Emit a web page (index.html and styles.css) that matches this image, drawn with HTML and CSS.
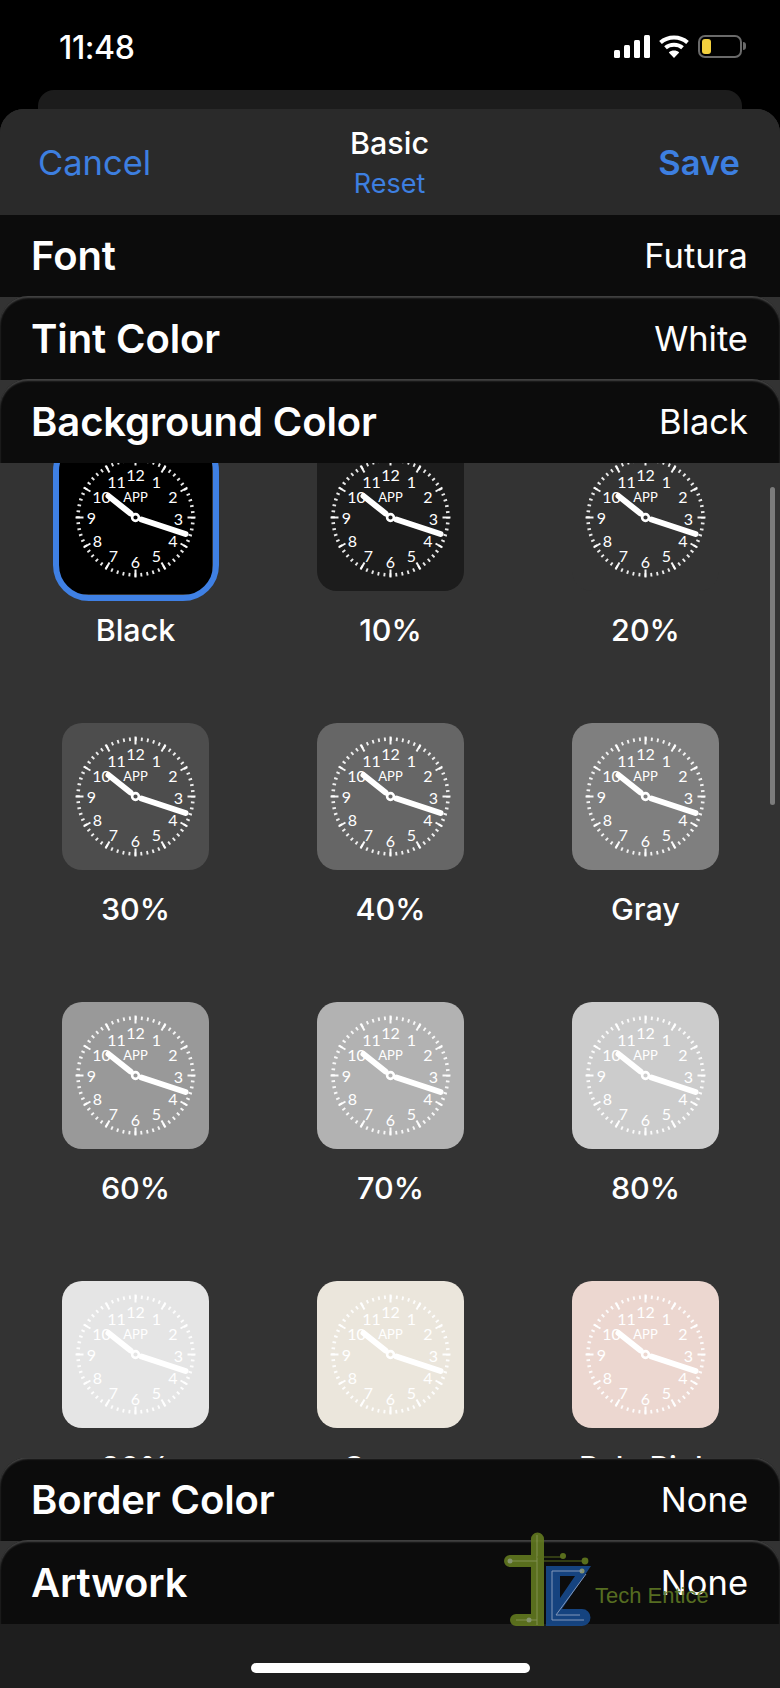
FILE: index.html
```html
<!DOCTYPE html>
<html lang="en">
<head>
<meta charset="utf-8">
<title>Basic</title>
<link rel="stylesheet" href="styles.css">
</head>
<body>
<main class="phone">
  <header class="status">
    <span class="time">11:48</span>
    <div class="status-icons">
      <svg class="signal" width="36" height="23" viewBox="0 0 36 23"><rect y="15" width="6" height="8" rx="1.5"/><rect x="10" y="10" width="6" height="13" rx="1.5"/><rect x="20" y="5" width="6" height="18" rx="1.5"/><rect x="30" y="0" width="6" height="23" rx="1.5"/></svg>
      <svg class="wifi" width="30" height="23" viewBox="0 0 30 23"><path d="M1.5 7.5 C9 0.8 21 0.8 28.5 7.5" /><path d="M6.5 12.8 C11 8.8 19 8.8 23.5 12.8"/><path class="wifi-dot" d="M15 23 L9.8 17.4 C12.6 15 17.4 15 20.2 17.4 Z"/></svg>
      <div class="battery"><span class="battery-fill"></span></div>
      <span class="battery-cap"></span>
    </div>
  </header>

  <div class="back-sheet"></div>

  <section class="sheet">
    <div class="nav">
      <button class="nav-btn">Cancel</button>
      <div class="nav-title"><strong>Basic</strong><a>Reset</a></div>
      <button class="nav-btn save">Save</button>
    </div>

    <div class="row flat"><span>Font</span><em>Futura</em></div>
    <div class="row"><span>Tint Color</span><em>White</em></div>
    <div class="row"><span>Background Color</span><em>Black</em></div>

    <div class="view">
      <div class="grid">
        <figure class="cell"><div class="tile selected t-black">
          <svg class="clock" viewBox="-73.5 -73.5 147 147">
            <g id="clock">
              <circle class="minor" r="57.5"/>
              <g class="major">
                <line y1="-60" y2="60"/>
                <line y1="-60" y2="60" transform="rotate(30)"/>
                <line y1="-60" y2="60" transform="rotate(60)"/>
                <line y1="-60" y2="60" transform="rotate(90)"/>
                <line y1="-60" y2="60" transform="rotate(120)"/>
                <line y1="-60" y2="60" transform="rotate(150)"/>
              </g>
              <g class="digits">
                <text x="0" y="-43">12</text>
                <text x="21" y="-36">1</text>
                <text x="37.5" y="-21.5">2</text>
                <text x="43" y="1">3</text>
                <text x="37.5" y="23">4</text>
                <text x="21" y="38">5</text>
                <text x="0" y="44">6</text>
                <text x="-22" y="38">7</text>
                <text x="-38" y="23">8</text>
                <text x="-44" y="0">9</text>
                <text x="-34" y="-21.5">10</text>
                <text x="-19" y="-36">11</text>
                <text class="app" x="0" y="-20.5">APP</text>
              </g>
              <path class="hand" d="M-5 -4 L-27 -21.5"/>
              <path class="hand" d="M6 2 L50 16.5"/>
              <circle class="hub" r="3.4"/>
            </g>
          </svg></div><figcaption>Black</figcaption></figure>
        <figure class="cell"><div class="tile t-10"><svg class="clock" viewBox="-73.5 -73.5 147 147"><use href="#clock"/></svg></div><figcaption>10%</figcaption></figure>
        <figure class="cell"><div class="tile t-20"><svg class="clock" viewBox="-73.5 -73.5 147 147"><use href="#clock"/></svg></div><figcaption>20%</figcaption></figure>
        <figure class="cell"><div class="tile t-30"><svg class="clock" viewBox="-73.5 -73.5 147 147"><use href="#clock"/></svg></div><figcaption>30%</figcaption></figure>
        <figure class="cell"><div class="tile t-40"><svg class="clock" viewBox="-73.5 -73.5 147 147"><use href="#clock"/></svg></div><figcaption>40%</figcaption></figure>
        <figure class="cell"><div class="tile t-gray"><svg class="clock" viewBox="-73.5 -73.5 147 147"><use href="#clock"/></svg></div><figcaption>Gray</figcaption></figure>
        <figure class="cell"><div class="tile t-60"><svg class="clock" viewBox="-73.5 -73.5 147 147"><use href="#clock"/></svg></div><figcaption>60%</figcaption></figure>
        <figure class="cell"><div class="tile t-70"><svg class="clock" viewBox="-73.5 -73.5 147 147"><use href="#clock"/></svg></div><figcaption>70%</figcaption></figure>
        <figure class="cell"><div class="tile t-80"><svg class="clock" viewBox="-73.5 -73.5 147 147"><use href="#clock"/></svg></div><figcaption>80%</figcaption></figure>
        <figure class="cell"><div class="tile t-90"><svg class="clock" viewBox="-73.5 -73.5 147 147"><use href="#clock"/></svg></div><figcaption>90%</figcaption></figure>
        <figure class="cell"><div class="tile t-cream"><svg class="clock" viewBox="-73.5 -73.5 147 147"><use href="#clock"/></svg></div><figcaption>Cream</figcaption></figure>
        <figure class="cell"><div class="tile t-pink"><svg class="clock" viewBox="-73.5 -73.5 147 147"><use href="#clock"/></svg></div><figcaption>Pale Pink</figcaption></figure>
      </div>
      <div class="scrollbar"></div>
    </div>

    <div class="row"><span>Border Color</span><em>None</em></div>
    <div class="row"><span>Artwork</span><em>None</em></div>
    <footer class="foot"><span class="home"></span></footer>
  </section>

  <div class="watermark">
    <svg class="logo" width="100" height="100" viewBox="0 0 100 100">
      <path class="lg-green" d="M31 9 a6.5 6.5 0 0 1 13 0 V96 H16 a6 6 0 0 1 0 -12 H31 V37 H10 a6 6 0 0 1 0 -12 H31 Z"/>
      <path class="lg-blue" d="M46 36 H91 L62 79 H82 a8.500 8.500 0 0 1 0 17 H46 Z M60 46 V68 L75 46 Z"/>
      <path class="lg-thin" d="M37 5 V95 M10 31 H37 M16 90 H37"/>
      <path class="lg-wire" d="M37 27 H63 M44 31 H85"/>
      <circle class="lg-node" cx="63" cy="26" r="3"/>
      <circle class="lg-node" cx="85" cy="31" r="3.400"/>
      <circle class="lg-dot" cx="10" cy="31" r="2.500"/>
      <circle class="lg-dot" cx="29" cy="90" r="2.500"/>
      <circle class="lg-dot" cx="82" cy="41" r="2.500"/>
      <path class="lg-line" d="M86 44 L56 85 H80 M82 41 H52 V90 H84"/>
    </svg>
    <span class="wm-text">Tech Entice</span>
  </div>
</main>
</body>
</html>
```
FILE: styles.css
```css
* { box-sizing: border-box; }
html, body { margin: 0; padding: 0; background: #000; }
body { font-family: Inter, "Liberation Sans", sans-serif; color: #fff; }

.phone { position: relative; width: 780px; height: 1688px; display: flex; flex-direction: column; overflow: hidden; background: #000; }

.status { height: 90px; flex: none; display: flex; justify-content: space-between; padding: 33px 34px 0 59px; }
.time { font-size: 32px; line-height: 30px; font-weight: 500; letter-spacing: -0.4px; }
.status-icons { display: flex; height: 23px; margin-top: 2px; align-items: flex-start; }
.signal { fill: #fff; margin-right: 9px; }
.wifi { margin-right: 9px; }
.wifi path { fill: none; stroke: #fff; stroke-width: 4px; }
.wifi .wifi-dot { fill: #fff; stroke: none; }
.battery { width: 44px; height: 23px; border: 2px solid #6a6a6a; border-radius: 7px; padding: 2px; }
.battery-fill { display: block; width: 9px; height: 15px; background: #f3d03e; border-radius: 3px; }
.battery-cap { width: 3px; height: 8px; margin: 7px 0 0 1px; background: #6a6a6a; border-radius: 0 3px 3px 0; }

.back-sheet { flex: none; height: 19px; margin: 0 38px; background: #1c1c1c; border-radius: 16px 16px 0 0; }

.sheet { flex: 1; min-height: 0; display: flex; flex-direction: column; background: #333; border-radius: 24px 24px 0 0; overflow: hidden; }

.nav { flex: none; height: 106px; background: #2a2a2a; display: grid; grid-template-columns: 1fr auto 1fr; align-items: center; padding: 0 40px 0 38px; }
.nav-btn { border: 0; padding: 2px 0 0; background: none; color: #3d7fe0; font: 400 34.5px/40px Inter, "Liberation Sans", sans-serif; justify-self: start; }
.nav-btn.save { font-weight: 600; justify-self: end; }
.nav-title { display: flex; flex-direction: column; align-items: center; padding-left: 1px; }
.nav-title strong { font-size: 30.5px; line-height: 34px; font-weight: 500; }
.nav-title a { font-size: 27px; line-height: 30px; margin-top: 9px; color: #3d7fe0; }

.row { flex: none; height: 84px; display: flex; justify-content: space-between; align-items: center; padding: 2px 32px 0 31px; background: #0c0c0c; border-radius: 28px 28px 0 0; box-shadow: inset 0 2px 2px #444; margin-top: -1px; }
.row.flat { height: 82px; margin-top: 0; padding-top: 0; border-radius: 0; box-shadow: none; }
.row span { font-size: 40px; line-height: 44px; font-weight: 600; letter-spacing: -0.1px; }
.row em { font-style: normal; font-size: 34.5px; line-height: 44px; font-weight: 400; }

.view { position: relative; flex: 1; min-height: 0; overflow: hidden; background: #333; }
.grid { display: grid; grid-template-columns: repeat(3, 147px); column-gap: 108px; row-gap: 76px; margin: -19px 0 0 62px; }
.cell { margin: 0; display: flex; flex-direction: column; align-items: center; }
.tile { position: relative; width: 147px; height: 147px; border-radius: 20px; }
.clock { display: block; width: 147px; height: 147px; }
figcaption { margin-top: 22px; font-size: 30.5px; line-height: 34px; font-weight: 500; white-space: nowrap; }

.selected { border-radius: 14px; box-shadow: 0 0 0 3px #000; }
.selected::after { content: ""; position: absolute; inset: -9px -10px -10px -9px; border: 6px solid #3f80e4; border-radius: 36px; }

.t-black { background: #000; }
.t-10 { background: #1c1c1c; }
.t-20 { background: #333; }
.t-30 { background: #4d4d4d; }
.t-40 { background: #666; }
.t-gray { background: #7f7f7f; }
.t-60 { background: #999; }
.t-70 { background: #b2b2b2; }
.t-80 { background: #ccc; }
.t-90 { background: #e5e5e5; }
.t-cream { background: #ebe6dc; }
.t-pink { background: #ecd7d0; }

.minor { fill: none; stroke: #fff; stroke-opacity: 0.9; stroke-width: 3.6px; stroke-dasharray: 1.9 4.12; stroke-dashoffset: 0.95; }
.major line { stroke: #fff; stroke-opacity: 0.95; stroke-width: 2px; stroke-dasharray: 8 104 8; }
.digits text { fill: #fff; font-family: Lato, "Liberation Sans", sans-serif; font-size: 16px; font-weight: 400; text-anchor: middle; dominant-baseline: central; }
.digits .app { font-size: 13px; font-weight: 400; }
.hand { fill: none; stroke: #fff; stroke-width: 6px; stroke-linecap: round; }
.hub { fill: transparent; stroke: #fff; stroke-width: 2.6px; }

.scrollbar { position: absolute; top: 24px; right: 5px; width: 5px; height: 318px; border-radius: 3px; background: #7c7c7c; }

.foot { flex: none; height: 64px; background: #1e1e1e; display: flex; justify-content: center; padding-top: 39px; }
.home { width: 279px; height: 10px; border-radius: 5px; background: #fff; }

.watermark { position: absolute; left: 500px; top: 1530px; width: 220px; height: 100px; opacity: 0.9; }
.logo { display: block; }
.lg-green { fill: #62791f; }
.lg-blue { fill: #174a8c; fill-rule: evenodd; }
.lg-thin { fill: none; stroke: #8ea05a; stroke-width: 1px; }
.lg-wire { fill: none; stroke: #62791f; stroke-width: 1px; }
.lg-node { fill: #62791f; }
.lg-dot { fill: #93a27a; }
.lg-line { fill: none; stroke: #8fa6cc; stroke-width: 1px; }
.wm-text { position: absolute; left: 95px; top: 51px; font-family: "Liberation Sans", sans-serif; font-size: 22px; line-height: 30px; color: #5f7824; white-space: nowrap; }
```
